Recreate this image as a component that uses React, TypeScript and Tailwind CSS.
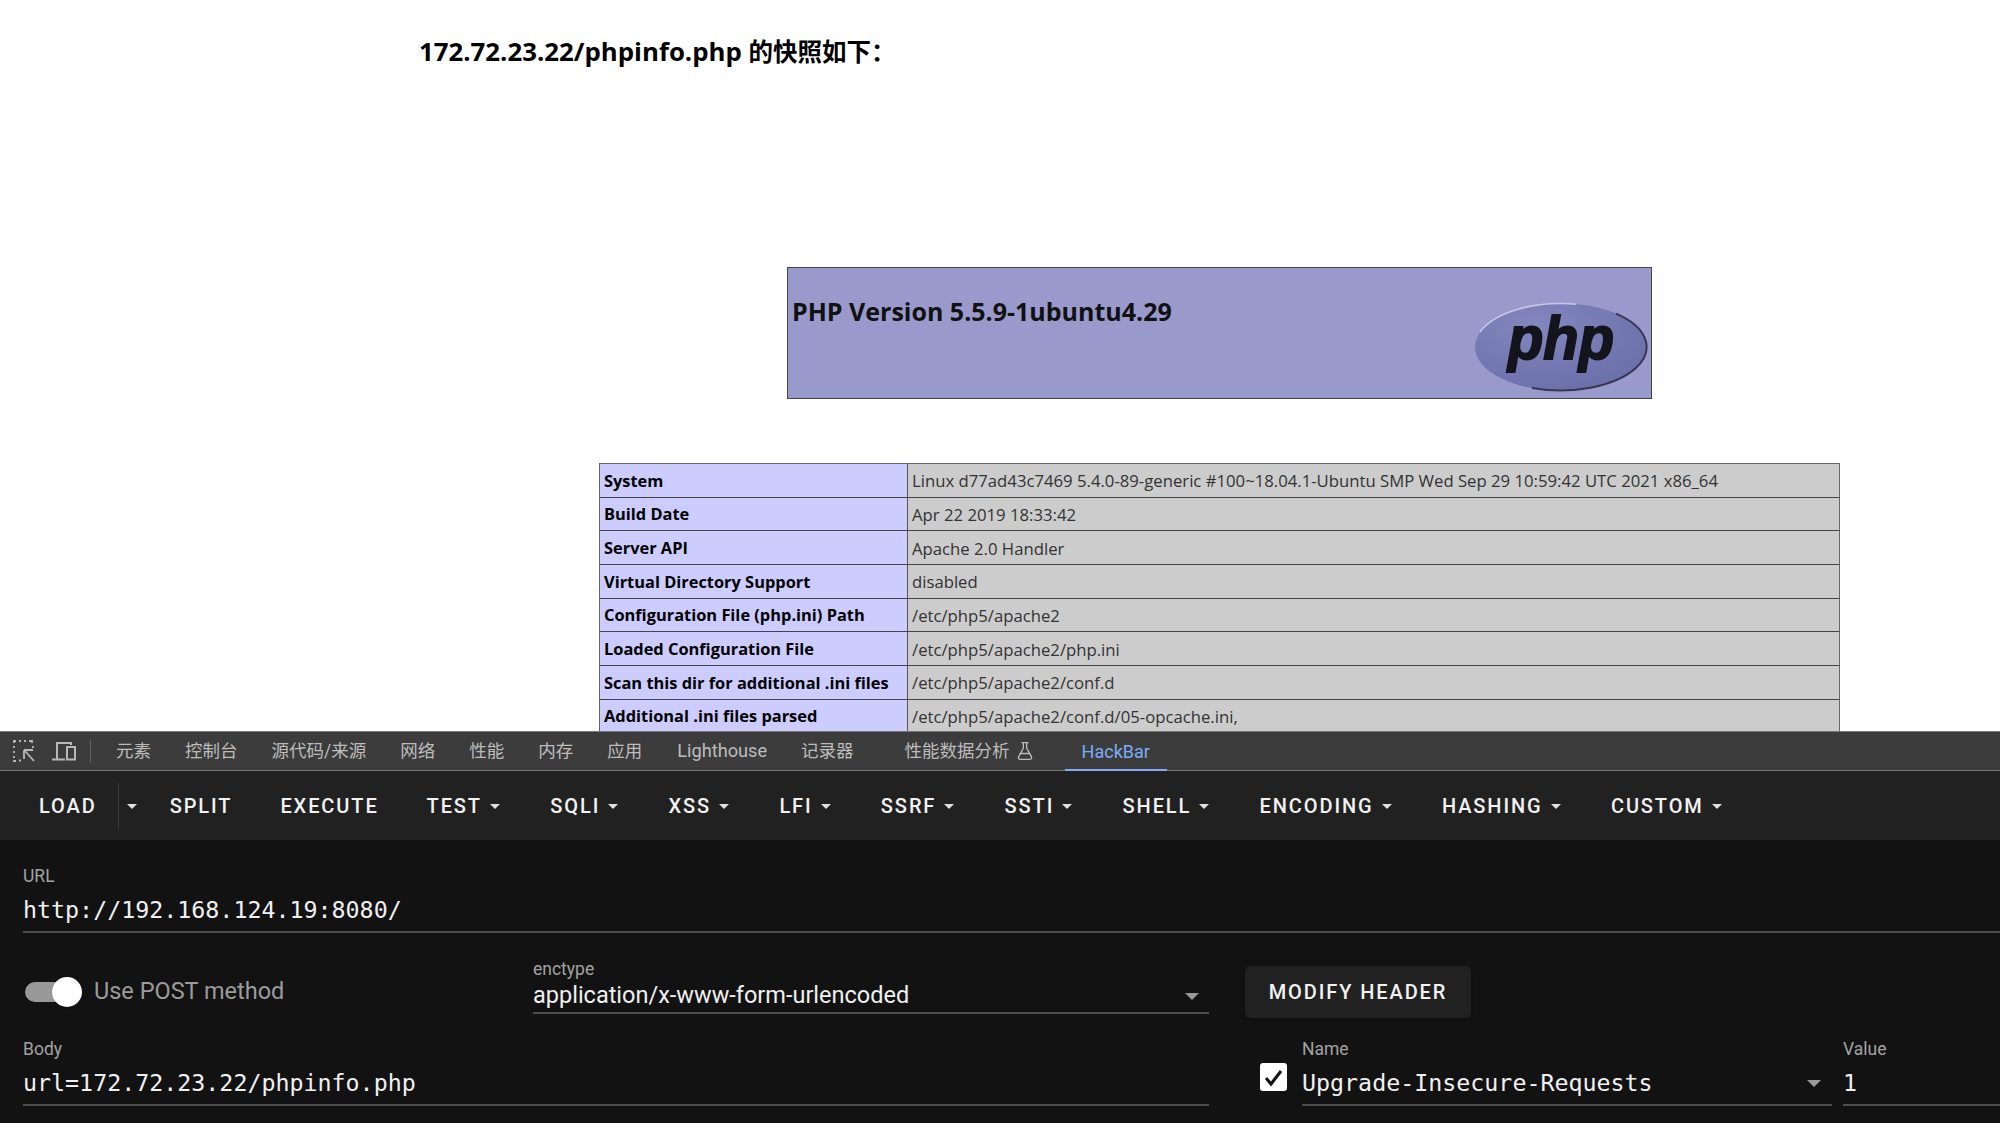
import { FlaskConical } from "lucide-react";

const phpRows = [
  ["System", "Linux d77ad43c7469 5.4.0-89-generic #100~18.04.1-Ubuntu SMP Wed Sep 29 10:59:42 UTC 2021 x86_64"],
  ["Build Date", "Apr 22 2019 18:33:42"],
  ["Server API", "Apache 2.0 Handler"],
  ["Virtual Directory Support", "disabled"],
  ["Configuration File (php.ini) Path", "/etc/php5/apache2"],
  ["Loaded Configuration File", "/etc/php5/apache2/php.ini"],
  ["Scan this dir for additional .ini files", "/etc/php5/apache2/conf.d"],
  ["Additional .ini files parsed", "/etc/php5/apache2/conf.d/05-opcache.ini,"],
];

const tabs = ["元素", "控制台", "源代码/来源", "网络", "性能", "内存", "应用"];
const menus = ["SQLI", "XSS", "LFI", "SSRF", "SSTI", "SHELL", "ENCODING", "HASHING", "CUSTOM"];

const Caret = () => (
  <span className="inline-block w-0 h-0 border-l-[5px] border-r-[5px] border-t-[5px] border-l-transparent border-r-transparent border-t-[#e0e0e0]" />
);

const SelectCaret = () => (
  <span className="inline-block w-0 h-0 border-l-[7px] border-r-[7px] border-t-[7px] border-l-transparent border-r-transparent border-t-[#9a9a9a]" />
);

const PhpLogo = () => (
  <svg width="174" height="90" viewBox="1 0 174 90" className="mt-[34px] mr-[3px]">
    <defs>
      <radialGradient id="phpFill" cx="35%" cy="25%" r="80%">
        <stop offset="0%" stopColor="#8387bd" />
        <stop offset="70%" stopColor="#7276b0" />
        <stop offset="100%" stopColor="#6c70a9" />
      </radialGradient>
    </defs>
    <ellipse cx="88" cy="45" rx="86" ry="43.5" fill="url(#phpFill)" />
    <path d="M7 30 A86 43.5 0 0 1 103 2.2" fill="none" stroke="#d4d6ec" strokeWidth="1.6" opacity="0.8" />
    <path d="M143 11.7 A86 43.5 0 0 1 59 86" fill="none" stroke="#24243a" strokeWidth="2" opacity="0.8" />
    <text
      x="88"
      y="57"
      textAnchor="middle"
      fontFamily="'Liberation Sans', sans-serif"
      fontSize="62"
      fontWeight="700"
      fontStyle="italic"
      fill="#14141c"
      stroke="#14141c"
      strokeWidth="2"
      textLength="106"
      lengthAdjust="spacingAndGlyphs"
    >
      php
    </text>
  </svg>
);

const InspectIcon = () => (
  <svg width="22" height="22" viewBox="0 0 22 22" fill="none" stroke="#b8b8b8" strokeWidth="1.8">
    <path d="M1 3V1h2M6 1h2M11 1h2M16 1h3v2M20 6v2M1 6v2M1 11v2M1 16v2M1 20v1h2M6 20.5h2" />
    <path d="M11 10h9M11 10v9M11.5 10.5 L21 21" />
  </svg>
);

const DeviceIcon = () => (
  <svg width="24" height="20" viewBox="0 0 24 20" fill="none" stroke="#b8b8b8" strokeWidth="2">
    <path d="M5 18V2h14v2" />
    <path d="M0 18.5h13" />
    <rect x="15" y="6" width="8" height="12.5" />
  </svg>
);

const Field = ({ label, value, width, caret }: { label: string; value: string; width: string; caret?: boolean }) => (
  <div className={`flex flex-col ${width}`}>
    <span className="text-[17.5px] leading-[20px] text-[#a3a3a3] font-['Roboto',sans-serif]">{label}</span>
    <div className="flex items-center justify-between h-[47px] pt-[4px] border-b-2 border-[#4d4d4d] text-[23.3px] text-[#f0f0f0] font-['DejaVu_Sans_Mono',monospace]">
      <span>{value}</span>
      {caret && (
        <span className="flex mr-[11px]">
          <SelectCaret />
        </span>
      )}
    </div>
  </div>
);

export default function App() {
  return (
    <div className="w-[2000px] h-[1123px] overflow-hidden flex flex-col bg-white font-['Roboto',sans-serif]">
      {/* page under devtools */}
      <div className="h-[731px] overflow-hidden font-['Open_Sans','Noto_Sans_CJK_SC',sans-serif]">
        <h2 className="ml-[419px] mt-[33px] text-[25.8px] leading-[36px] font-bold text-black">
          172.72.23.22/phpinfo.php <span className="text-[24.5px]">的快照如下：</span>
        </h2>
        <div className="ml-[787px] mt-[197px] w-[865px] h-[132px] flex justify-between bg-[#9999cc] border border-[#444]">
          <h1 className="ml-[4px] mt-[26px] text-[25px] leading-[34px] font-bold text-[#111]">
            PHP Version 5.5.9-1ubuntu4.29
          </h1>
          <PhpLogo />
        </div>
        <div className="ml-[599px] mt-[64px] w-[1241px] border border-[#666] border-b-0">
          {phpRows.map(([k, v]) => (
            <div key={k} className="grid grid-cols-[308px_1fr] h-[33.7px] border-b border-[#444]">
              <div className="flex items-center pl-[4px] pt-[1px] bg-[#ccccff] border-r border-[#555] text-[16.4px] font-bold text-black whitespace-nowrap">
                {k}
              </div>
              <div className="flex items-center pl-[4px] pt-[1px] bg-[#cccccc] text-[16.72px] text-[#333] whitespace-nowrap">
                {v}
              </div>
            </div>
          ))}
        </div>
      </div>

      {/* devtools tab strip */}
      <div className="h-[40px] flex items-center bg-[#3c3c3c] border-t border-b border-[#777] text-[17.5px] text-[#bcbcbc] font-['Roboto','Noto_Sans_CJK_SC',sans-serif]">
        <div className="flex items-center ml-[13px] gap-[17px]">
          <InspectIcon />
          <DeviceIcon />
        </div>
        <div className="ml-[14px] mr-[8px] w-px h-[24px] bg-[#5f5f5f]" />
        {tabs.map((t) => (
          <div key={t} className="px-[17px] h-full flex items-center">
            {t}
          </div>
        ))}
        <div className="ml-[1px] px-[17px] h-full flex items-center text-[18.2px]">Lighthouse</div>
        <div className="px-[17px] mr-[17px] h-full flex items-center">记录器</div>
        <div className="px-[17px] h-full flex items-center gap-[5px]">
          性能数据分析
          <FlaskConical size={20} strokeWidth={1.6} />
        </div>
        <div className="relative ml-[13px] px-[17px] h-full flex items-center text-[18px] text-[#7cacf8]">
          HackBar
          <span className="absolute left-0 right-0 bottom-[-1px] h-[2px] bg-[#7cacf8]" />
        </div>
      </div>

      {/* hackbar toolbar */}
      <div className="h-[69px] flex items-center pl-[39px] pt-[1px] bg-[#212121] text-[20px] font-medium tracking-[1.9px] text-[#f2f2f2] shadow-md">
        <span>LOAD</span>
        <span className="ml-[21px] w-px h-[46px] bg-[#3a3a3a]" />
        <span className="ml-[8px] flex">
          <Caret />
        </span>
        <span className="ml-[33px]">SPLIT</span>
        <span className="ml-[48px]">EXECUTE</span>
        <div className="ml-[48px] flex items-center gap-[8px]">
          <span>TEST</span>
          <Caret />
        </div>
        {menus.map((m) => (
          <div key={m} className="ml-[50.3px] flex items-center gap-[8px]">
            <span>{m}</span>
            <Caret />
          </div>
        ))}
      </div>

      {/* form */}
      <div className="flex-1 flex flex-col pl-[23px] bg-[#121212] overflow-hidden">
        <div className="mt-[26px]">
          <Field label="URL" value="http://192.168.124.19:8080/" width="w-full" />
        </div>

        <div className="flex items-start mt-[26px]">
          <div className="w-[510px] flex items-center mt-[15px]">
            <div className="relative w-[56px] h-[20px] ml-[2px] rounded-full bg-[#999]">
              <span className="absolute right-[-1px] top-[-5px] w-[30px] h-[30px] rounded-full bg-white shadow" />
            </div>
            <span className="ml-[13px] text-[23.5px] text-[#9b9b9b]">Use POST method</span>
          </div>
          <div className="w-[676px] flex flex-col">
            <span className="text-[17.5px] leading-[20px] text-[#a3a3a3]">enctype</span>
            <div className="flex items-center justify-between h-[35px] pt-[1px] border-b-2 border-[#4d4d4d] text-[23.5px] text-[#f0f0f0]">
              <span>application/x-www-form-urlencoded</span>
              <span className="flex mr-[10px]">
                <SelectCaret />
              </span>
            </div>
          </div>
          <button className="ml-[36px] mt-[7px] w-[226px] h-[52px] rounded-[5px] bg-[#212121] text-[20px] font-medium tracking-[1.9px] text-[#f2f2f2] shadow">
            MODIFY HEADER
          </button>
        </div>

        <div className="flex items-end mt-[21px]">
          <Field label="Body" value="url=172.72.23.22/phpinfo.php" width="w-[1186px]" />
          <div className="ml-[51px] mb-[15px] w-[27px] h-[28px] rounded-[3px] bg-white flex items-center justify-center">
            <svg width="21" height="21" viewBox="0 0 21 21" fill="none" stroke="#121212" strokeWidth="3">
              <path d="M3 11l5 6L18 4" />
            </svg>
          </div>
          <div className="ml-[15px]">
            <Field label="Name" value="Upgrade-Insecure-Requests" width="w-[530px]" caret />
          </div>
          <div className="ml-[11px] flex-1">
            <Field label="Value" value="1" width="w-full" />
          </div>
        </div>
      </div>
    </div>
  );
}
